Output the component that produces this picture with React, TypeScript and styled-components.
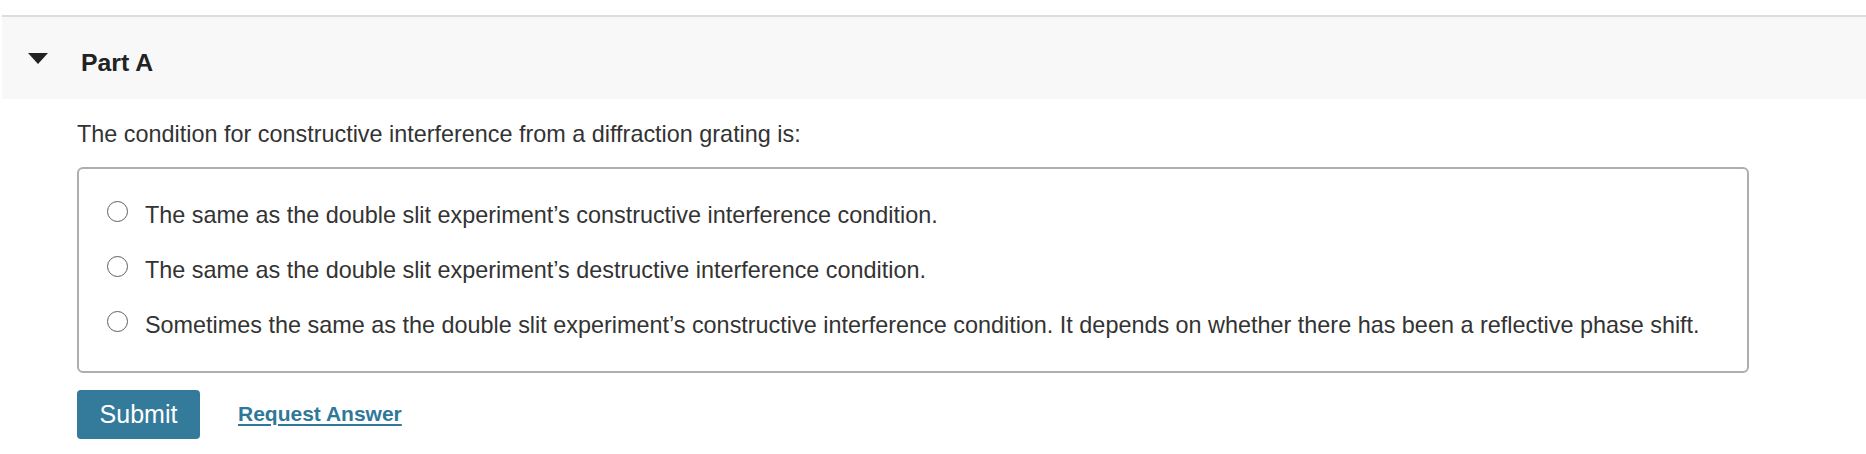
import React from 'react';
import styled, { createGlobalStyle } from 'styled-components';

const GlobalStyle = createGlobalStyle`
    html, body {
        margin: 0;
        padding: 0;
        background: #ffffff;
    }
    body {
        font-family: "Liberation Sans", Arial, Helvetica, sans-serif;
        color: #333333;
    }
`;

const Page = styled.div`
    padding: 15px 0 0 2px;
    width: 1866px;
    box-sizing: border-box;
`;

const PartHeader = styled.div`
    display: flex;
    align-items: center;
    height: 84px;
    box-sizing: border-box;
    border-top: 2px solid #dddddd;
    background-color: #f8f8f8;
    padding-left: 26px;
`;

const Caret = styled.span`
    width: 0;
    height: 0;
    border-left: 10px solid transparent;
    border-right: 10px solid transparent;
    border-top: 11px solid #222222;
    margin-right: 33px;
`;

const PartTitle = styled.h2`
    margin: 0;
    padding-top: 9px;
    font-size: 24.8px;
    font-weight: 700;
    color: #222222;
`;

const PartBody = styled.div`
    padding: 19px 0 0 75px;
`;

const Question = styled.p`
    margin: 0;
    font-size: 23.4px;
    line-height: 32.8px;
    color: #333333;
`;

const ChoiceBox = styled.div`
    margin-top: 16px;
    width: 1672px;
    box-sizing: border-box;
    border: 2px solid #aeaeae;
    border-radius: 6px;
    padding: 19px 0 18px 28px;
    display: flex;
    flex-direction: column;
`;

const Choice = styled.label`
    display: flex;
    align-items: center;
    gap: 17px;
    height: 55px;
    font-size: 23.4px;
    line-height: 55px;
    color: #333333;
    cursor: pointer;
`;

const Radio = styled.input.attrs({ type: 'radio' })`
    appearance: none;
    margin: 0 0 7px 0;
    width: 21px;
    height: 21px;
    flex: none;
    border: 1.6px solid #5f5f5f;
    border-radius: 50%;
    background: #ffffff;
    box-sizing: border-box;
`;

const Actions = styled.div`
    display: flex;
    align-items: center;
    gap: 38px;
    margin-top: 17px;
`;

const SubmitButton = styled.button`
    width: 123px;
    height: 49px;
    border: none;
    border-radius: 4px;
    background-color: #347a9b;
    color: #ffffff;
    font-family: "Liberation Sans", Arial, Helvetica, sans-serif;
    font-size: 25px;
    padding: 0;
    cursor: pointer;
`;

const RequestLink = styled.a`
    font-size: 21px;
    font-weight: 700;
    color: #2f7898;
    text-decoration: underline;
    text-underline-offset: 3px;
    cursor: pointer;
`;

const choices = [
    'The same as the double slit experiment’s constructive interference condition.',
    'The same as the double slit experiment’s destructive interference condition.',
    'Sometimes the same as the double slit experiment’s constructive interference condition. It depends on whether there has been a reflective phase shift.',
];

const App: React.FC = () => {
    return (
        <>
            <GlobalStyle />
            <Page>
                <PartHeader>
                    <Caret />
                    <PartTitle>Part A</PartTitle>
                </PartHeader>
                <PartBody>
                    <Question>The condition for constructive interference from a diffraction grating is:</Question>
                    <ChoiceBox>
                        {choices.map((c) => (
                            <Choice key={c}>
                                <Radio name="partA" />
                                <span>{c}</span>
                            </Choice>
                        ))}
                    </ChoiceBox>
                    <Actions>
                        <SubmitButton>Submit</SubmitButton>
                        <RequestLink>Request Answer</RequestLink>
                    </Actions>
                </PartBody>
            </Page>
        </>
    );
};

export default App;
